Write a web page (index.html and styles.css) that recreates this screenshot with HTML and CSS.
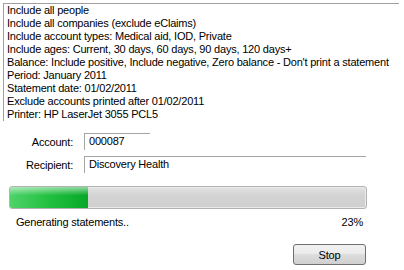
FILE: index.html
```html
<!DOCTYPE html>
<html>
  <head>
    <meta charset="utf-8" />
    <title>Print statements</title>
    <link rel="stylesheet" href="styles.css">
  </head>
  <body>
    <section class="dialog">
      <div class="summary">
        <div>Include all people</div>
        <div>Include all companies (exclude eClaims)</div>
        <div>Include account types: Medical aid, IOD, Private</div>
        <div>Include ages: Current, 30 days, 60 days, 90 days, 120 days+</div>
        <div>Balance: Include positive, Include negative, Zero balance - Don't print a statement</div>
        <div>Period: January 2011</div>
        <div>Statement date: 01/02/2011</div>
        <div>Exclude accounts printed after 01/02/2011</div>
        <div>Printer: HP LaserJet 3055 PCL5</div>
      </div>

      <div class="fields">
        <div class="field">
          <label>Account:</label>
          <span class="box account">000087</span>
        </div>
        <div class="field">
          <label>Recipient:</label>
          <span class="box recipient">Discovery Health</span>
        </div>
      </div>

      <div class="progress">
        <div class="fill" style="width: 22%"></div>
      </div>

      <div class="status">
        <span>Generating statements..</span>
        <span>23%</span>
      </div>

      <div class="actions">
        <button type="button">Stop</button>
      </div>
    </section>
  </body>
</html>
```

FILE: styles.css
```css
/* ---------- reset ---------- */
* {
  margin: 0;
  padding: 0;
  box-sizing: border-box;
}

body {
  background: #fff;
  color: #000;
  font-family: "Liberation Sans", Arial, sans-serif;
  font-size: 11px;
  letter-spacing: -0.2px;
}

/* ---------- summary list ---------- */
.dialog {
  padding-top: 3px;
}

.summary {
  margin: 0 5px 0 3px;
  height: 118px;
  overflow: hidden;
  white-space: nowrap;
  border-top: 1px solid #a0a0a0;
  border-left: 1px solid #a0a0a0;
  padding: 0 0 0 3px;
  line-height: 13px;
}

/* ---------- account / recipient ---------- */
.fields {
  margin-top: 12px;
  display: flex;
  flex-direction: column;
  gap: 6px;
}

.field {
  display: flex;
  align-items: center;
}

.field label {
  width: 74px;
  text-align: right;
  padding-right: 1px;
}

.box {
  margin-left: 10px;
  height: 17px;
  line-height: 15px;
  padding-left: 4px;
  white-space: nowrap;
  border-top: 1px solid #a5a5a5;
  border-left: 1px solid #a5a5a5;
}

.box.account {
  width: 66px;
}

.box.recipient {
  width: 282px;
}

/* ---------- progress ---------- */
.progress {
  margin: 13px 0 0 9px;
  width: 358px;
  height: 23px;
  border: 1px solid #b2b2b2;
  border-radius: 3px;
  background: linear-gradient(#e2e2e2, #d3d3d3 40%, #cfcfcf);
  overflow: hidden;
  box-shadow: inset 0 0 0 1px #eaeaea;
}

.fill {
  height: 100%;
  background:
    linear-gradient(rgba(255, 255, 255, 0.55), rgba(255, 255, 255, 0) 40%),
    linear-gradient(90deg, #4fd26a, #22c040 50%, #06a82a);
}

.status {
  width: 347px;
  margin: 7px 0 0 16px;
  display: flex;
  justify-content: space-between;
  line-height: 13px;
}

/* ---------- buttons ---------- */
.actions {
  width: 366px;
  margin-top: 15px;
  display: flex;
  justify-content: flex-end;
}

.actions button {
  width: 73px;
  height: 21px;
  font-family: "Liberation Sans", Arial, sans-serif;
  font-size: 11px;
  letter-spacing: -0.2px;
  color: #000;
  border: 1px solid #707070;
  border-radius: 3px;
  background: linear-gradient(#f2f2f2, #ebebeb 45%, #dddddd 50%, #cfcfcf);
}
```
